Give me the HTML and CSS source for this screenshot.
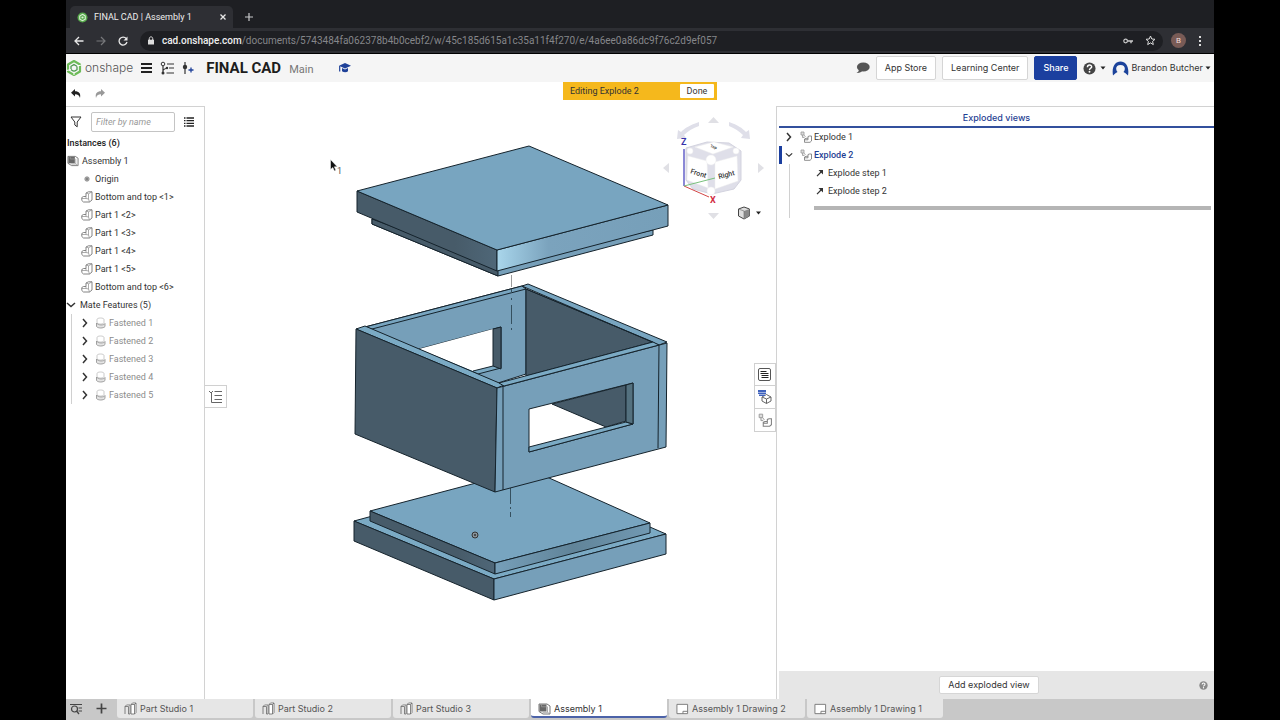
FILE: index.html
```
<!DOCTYPE html>
<html lang="en">
<head>
    <meta charset="UTF-8">
    <meta name="viewport" content="width=device-width, initial-scale=1">
    <title>FINAL CAD | Assembly 1</title>
    <link rel="stylesheet" href="styles.css">
</head>
<body>
<!-- Shared icons -->
<svg class="sprite" aria-hidden="true">
    <symbol id="i-logo" viewBox="0 0 16 16">
        <path d="M8 1 14 4.5v7L8 15 2 11.5v-7z" fill="none" stroke="#6dbb59" stroke-width="2.2" stroke-linejoin="round"/>
        <path d="M8 4.6l3 1.7v3.4l-3 1.7-3-1.7V6.3z" fill="none" stroke="#4f9a52" stroke-width="1.3"/>
        <path d="M.5 10.5 5 9.6M11 6l4.500-1M8 11.500V15" stroke="#fff" stroke-width="1"/>
    </symbol>
    <symbol id="i-part" viewBox="0 0 12 12">
        <path d="M.8 6.500 2.500 5.500H5V2L7.500.8H11V9L8.500 11H2.500L.8 9.500z" fill="#fff" stroke="#777" stroke-width=".9"/>
        <path d="M5 5.500V7.500H.8M5 2l2.500.8V8L5 7.500M7.500 2.800 11 .8M7.500 8l1 3" fill="none" stroke="#8a8a8a" stroke-width=".7"/>
    </symbol>
    <symbol id="i-assembly" viewBox="0 0 13 12">
        <path d="M1 1h8l3 2v8H5L1 8.500z" fill="#fff" stroke="#666" stroke-width=".9"/>
        <path d="M1.500 1.500h7v7h-7z" fill="#686868"/>
        <path d="M3.500 1.500v2.300h5M9.500 3.500v5.800H4.500M9.500 9.300 12 11" fill="none" stroke="#999" stroke-width=".8"/>
    </symbol>
    <symbol id="i-mate" viewBox="0 0 12 12">
        <path d="M2 2.500c0-2 7-2 7 0v3c0 2-7 2-7 0z" fill="none" stroke="#c4c4c4" stroke-width=".9"/>
        <path d="M1.500 6v3.500c1.500 2 7 2 8.500 0V6.500c-1 2-7 2-8.500-.5z" fill="#e4e4e4" stroke="#8d8d8d" stroke-width=".8"/>
    </symbol>
    <symbol id="i-right" viewBox="0 0 8 10">
        <path d="M2 1l3.500 4L2 9" fill="none" stroke="#333" stroke-width="1.500"/>
    </symbol>
    <symbol id="i-down" viewBox="0 0 10 8">
        <path d="M1 2l4 3.500L9 2" fill="none" stroke="#333" stroke-width="1.500"/>
    </symbol>
    <symbol id="i-explode" viewBox="0 0 12 12">
        <path d="M1 1h3v3H1zM4 4l1.500 2M2.500 4v2.500h2" fill="#ddd" stroke="#999" stroke-width=".8"/>
        <path d="M4.500 8 6 7.300h2V5.500L9.500 5h2v5L10 11.300H4.500zM8 7.300v1.500H4.500" fill="#fff" stroke="#808080" stroke-width=".9"/>
    </symbol>
    <symbol id="i-step" viewBox="0 0 8 8">
        <path d="M1 7.200 6 2" stroke="#333" stroke-width="1.200"/>
        <path d="M2.500 1H7v4.500z" fill="#333"/>
    </symbol>
    <symbol id="i-studio" viewBox="0 0 13 13">
        <path d="M1 4.500 2.500 3H6v9H4.500V4.500H1V12M7 2.500 8.500 1H12v9.500L10.500 12H7zM7 2.500h3.500V12M10.500 2.500 12 1" fill="#fff" stroke="#666" stroke-width=".8"/>
    </symbol>
    <symbol id="i-drawing" viewBox="0 0 14 12">
        <path d="M1 1h11.500v10H1z" fill="#fff" stroke="#777"/>
        <path d="M7.500 11V8.500h5" fill="none" stroke="#777"/>
    </symbol>
    <symbol id="i-caret" viewBox="0 0 6 4">
        <path d="M.5.500h5L3 3.500z" fill="#222"/>
    </symbol>
    <symbol id="i-help" viewBox="0 0 14 14">
        <circle cx="7" cy="7" r="6.500" fill="currentColor"/>
        <path d="M4.800 5.600c0-3.200 4.600-2.900 4.500-.3C9.200 6.800 7 6.700 7 8.500" fill="none" stroke="#fff" stroke-width="1.600"/>
        <circle cx="7" cy="10.500" r="1" fill="#fff"/>
    </symbol>
</svg>

<div class="app">
    <!-- Browser chrome -->
    <div class="tabstrip">
        <div class="browser-tab">
            <svg class="favicon" viewBox="0 0 12 12"><circle cx="6" cy="6" r="5.500" fill="#58a94c"/><path d="M6 2.500 9 4.300v3.500L6 9.500 3 7.800V4.300z" fill="none" stroke="#dcf0d8" stroke-width="1.200"/><circle cx="6" cy="6" r="1.200" fill="#dcf0d8"/></svg>
            <span class="browser-tab-title">FINAL CAD | Assembly 1</span>
            <button class="icon-btn" aria-label="Close tab"><svg width="8" height="8" viewBox="0 0 8 8"><path d="M1.500 1.500l5 5M6.500 1.500l-5 5" stroke="#e8e8e8" stroke-width="1.300"/></svg></button>
        </div>
        <button class="icon-btn" aria-label="New tab"><svg width="10" height="10" viewBox="0 0 10 10"><path d="M5 1v8M1 5h8" stroke="#c8c9cb" stroke-width="1.200"/></svg></button>
    </div>
    <div class="urlbar">
        <button class="icon-btn" aria-label="Back"><svg width="10" height="10" viewBox="0 0 10 10"><path d="M9.500 5H1.200M5 1 1 5l4 4" fill="none" stroke="#e8e8e8" stroke-width="1.300"/></svg></button>
        <button class="icon-btn" aria-label="Forward"><svg width="10" height="10" viewBox="0 0 10 10"><path d="M.5 5h8.300M5 1l4 4-4 4" fill="none" stroke="#77787b" stroke-width="1.200"/></svg></button>
        <button class="icon-btn" aria-label="Reload"><svg width="10" height="10" viewBox="0 0 10 10"><path d="M8.300 2.600A4 4 0 1 0 9 6" fill="none" stroke="#e8e8e8" stroke-width="1.300"/><path d="M9.500.500v4h-4z" fill="#e8e8e8"/></svg></button>
        <div class="address">
            <svg width="8" height="9" viewBox="0 0 8 9"><path d="M1 3.700h6v4.800H1z" fill="#ddd"/><path d="M2.300 4V2.500c0-2.200 3.400-2.200 3.400 0V4" fill="none" stroke="#ddd"/></svg>
            <span class="url"><b>cad.onshape.com</b>/documents/5743484fa062378b4b0cebf2/w/45c185d615a1c35a11f4f270/e/4a6ee0a86dc9f76c2d9ef057</span>
            <svg width="10" height="8" viewBox="0 0 10 8"><circle cx="2.600" cy="4" r="1.800" fill="none" stroke="#ccc" stroke-width="1.200"/><path d="M4.400 4H10M8 4v2.300" stroke="#ccc" stroke-width="1.400"/></svg>
            <svg width="11" height="11" viewBox="0 0 11 11"><path d="M5.500 1l1.300 3 3.200.3-2.400 2.100.7 3.200-2.800-1.700-2.800 1.700.7-3.200L1 4.300 4.200 4z" fill="none" stroke="#ddd"/></svg>
        </div>
        <span class="profile">B</span>
        <button class="icon-btn" aria-label="Browser menu"><svg width="4" height="10" viewBox="0 0 4 10"><path d="M1 0h2v2H1zM1 4h2v2H1zM1 8h2v2H1z" fill="#ddd"/></svg></button>
    </div>

    <!-- Document header -->
    <header class="header">
        <svg class="logo" width="16" height="16"><use href="#i-logo"/></svg>
        <span class="brand">onshape</span>
        <div class="header-tools">
            <button class="icon-btn" aria-label="Menu"><svg width="11" height="12" viewBox="0 0 11 12"><path d="M0 2h11M0 6h11M0 10h11" stroke="#222" stroke-width="1.800"/></svg></button>
            <button class="icon-btn" aria-label="Versions"><svg width="14" height="14" viewBox="0 0 14 14"><circle cx="3" cy="3" r="1.800" fill="none" stroke="#333"/><path d="M3 5v6.500M3 10c0-3 3-1 3.500-3.500M7 3h7M9 7h5M6.500 12H14" fill="none" stroke="#333" stroke-width="1.200"/><circle cx="3" cy="12" r="1.500" fill="#333"/><circle cx="7" cy="7" r="1.200" fill="#333"/></svg></button>
            <button class="icon-btn" aria-label="Create version"><svg width="12" height="14" viewBox="0 0 12 14"><path d="M3 1v12" stroke="#333" stroke-width="1.200"/><circle cx="3" cy="6" r="2.200" fill="#333"/><path d="M9 6.500v5M6.500 9h5" stroke="#1f4199" stroke-width="1.300"/></svg></button>
        </div>
        <h1 class="doc-name">FINAL CAD</h1>
        <span class="workspace">Main</span>
        <svg class="cap" width="13" height="11" viewBox="0 0 13 11"><path d="M7 0l6 2.800-6 2.800L1 2.800z" fill="#1f4199"/><path d="M4 5v3.200c2 1.300 4.500 1.300 6 0V5L7 6.500z" fill="#1f4199"/><path d="M1.700 3v5.500" stroke="#1f4199" stroke-width="1.200"/></svg>
        <div class="header-actions">
            <button class="icon-btn" aria-label="Comments"><svg width="14" height="12" viewBox="0 0 14 12"><ellipse cx="7.300" cy="5" rx="6.400" ry="4.600" fill="#555"/><path d="M3 7c0 2-.8 3-2.500 4C3.500 11.300 5.500 10 6.500 8.500z" fill="#555"/></svg></button>
            <button class="btn">App Store</button>
            <button class="btn">Learning Center</button>
            <button class="btn btn-primary">Share</button>
            <button class="icon-btn help-menu" aria-label="Help"><svg width="13" height="13"><use href="#i-help"/></svg><svg width="6" height="4"><use href="#i-caret"/></svg></button>
            <button class="user"><svg width="17" height="15" viewBox="0 0 17 15"><path d="M1 14.500C-.5 6 3 .5 8.500.5S17.500 6 16 14.500l-2.500-2.300-2-1.200c2.500-3 1.500-7-3-7s-5.500 4-3 7l-2 1.200z" fill="#1c439b"/></svg>Brandon Butcher<svg width="6" height="4"><use href="#i-caret"/></svg></button>
        </div>
    </header>

    <div class="toolbar">
        <div class="history">
            <button class="icon-btn" aria-label="Undo"><svg width="10" height="9" viewBox="0 0 10 9"><path d="M0 3.700 4 0v2.300c4 0 6 2.200 5 6.700C8.500 6.500 7 5.200 4 5.200v2.300z" fill="#222"/></svg></button>
            <button class="icon-btn" aria-label="Redo"><svg width="10" height="9" viewBox="0 0 10 9"><path d="M10 3.700 6 0v2.300C2 2.300 0 4.500 1 9c.5-2.500 2-3.800 5-3.800v2.300z" fill="#999"/></svg></button>
        </div>
        <div class="edit-banner">
            <span>Editing Explode 2</span>
            <button class="done">Done</button>
        </div>
    </div>

    <main class="workarea">
        <!-- Instance list -->
        <aside class="sidebar">
            <div class="filter">
                <svg width="12" height="12" viewBox="0 0 12 12"><path d="M1 1h10L7.200 6v4.800L4.800 9V6z" fill="none" stroke="#333"/></svg>
                <input class="filter-input" type="text" placeholder="Filter by name" aria-label="Filter by name">
                <button class="icon-btn" aria-label="List options"><svg width="10" height="10" viewBox="0 0 10 10"><path d="M0 1h1.500M0 3.700h1.500M0 6.300h1.500M0 9h1.500M2.500 1H10M2.500 3.700H10M2.500 6.300H10M2.500 9H10" stroke="#222" stroke-width="1.300"/></svg></button>
            </div>
            <h2 class="list-title">Instances (6)</h2>
            <ul class="tree">
                <li class="tree-root"><svg width="12" height="12"><use href="#i-assembly"/></svg>Assembly 1</li>
                <li class="tree-item"><svg width="12" height="12" viewBox="0 0 12 12"><circle cx="6" cy="6" r="2.200" fill="#aaa" stroke="#888" stroke-width=".8"/><circle cx="6" cy="6" r=".8" fill="#555"/></svg>Origin</li>
                <li class="tree-item"><svg width="12" height="12"><use href="#i-part"/></svg>Bottom and top &lt;1&gt;</li>
                <li class="tree-item"><svg width="12" height="12"><use href="#i-part"/></svg>Part 1 &lt;2&gt;</li>
                <li class="tree-item"><svg width="12" height="12"><use href="#i-part"/></svg>Part 1 &lt;3&gt;</li>
                <li class="tree-item"><svg width="12" height="12"><use href="#i-part"/></svg>Part 1 &lt;4&gt;</li>
                <li class="tree-item"><svg width="12" height="12"><use href="#i-part"/></svg>Part 1 &lt;5&gt;</li>
                <li class="tree-item"><svg width="12" height="12"><use href="#i-part"/></svg>Bottom and top &lt;6&gt;</li>
                <li class="tree-group"><svg width="10" height="8"><use href="#i-down"/></svg>Mate Features (5)</li>
            </ul>
            <ul class="tree mates">
                <li class="mate"><svg width="8" height="10"><use href="#i-right"/></svg><svg width="12" height="12"><use href="#i-mate"/></svg>Fastened 1</li>
                <li class="mate"><svg width="8" height="10"><use href="#i-right"/></svg><svg width="12" height="12"><use href="#i-mate"/></svg>Fastened 2</li>
                <li class="mate"><svg width="8" height="10"><use href="#i-right"/></svg><svg width="12" height="12"><use href="#i-mate"/></svg>Fastened 3</li>
                <li class="mate"><svg width="8" height="10"><use href="#i-right"/></svg><svg width="12" height="12"><use href="#i-mate"/></svg>Fastened 4</li>
                <li class="mate"><svg width="8" height="10"><use href="#i-right"/></svg><svg width="12" height="12"><use href="#i-mate"/></svg>Fastened 5</li>
            </ul>
        </aside>

        <!-- Graphics area -->
        <section class="viewport">
            <svg class="scene" viewBox="205 106 571 593">
                <defs>
                    <linearGradient id="shine"><stop offset="0" stop-color="#aad6eb"/><stop offset=".08" stop-color="#9cc8df"/><stop offset=".3" stop-color="#7ba3bd"/><stop offset="1" stop-color="#769fb9"/></linearGradient>
                    <linearGradient id="side"><stop offset="0" stop-color="#475b69"/><stop offset=".7" stop-color="#475b69"/><stop offset="1" stop-color="#4f6778"/></linearGradient>
                    <linearGradient id="lip"><stop offset="0" stop-color="#769fb9"/><stop offset=".5" stop-color="#618499"/><stop offset="1" stop-color="#7199b2"/></linearGradient>
                </defs>
                <g stroke="#15232c" stroke-width="1" stroke-linejoin="round">
                    <!-- bottom -->
                    <path d="M354 521 528 474 666 534 494 579z" fill="#7baac4"/>
                    <path d="M354 521 494 579V600L354 541z" fill="#475b69"/>
                    <path d="M494 579 666 534V554L494 600z" fill="#769fb9"/>
                    <path d="M370 511 529 469 650 523 495 563z" fill="#78a5c0"/>
                    <path d="M370 511 495 563V574L370 521z" fill="url(#side)"/>
                    <path d="M495 563 650 523V533L495 574z" fill="url(#lip)"/>
                    <path d="M510.500 488V504M510.500 507v2M510.500 512v5" stroke="#35505f"/>
                    <circle cx="475" cy="535" r="3" fill="#88939a" stroke="#333"/><circle cx="475" cy="535" r="1" fill="#333" stroke="none"/>
                    <!-- frame: back wall with its window -->
                    <path d="M365 327 522 286 526 289V374L498 383z" fill="#769fb9"/>
                    <path d="M419 349 501 327V368L478 374z" fill="#7baac4"/>
                    <path d="M419 349 493 329V366L473 371z" fill="#fff" stroke="none"/>
                    <path d="M493 329 501 327V369L493 366z" fill="#475b69"/>
                    <path d="M473 371 493 366" fill="none"/>
                    <path d="M365 327 522 286 526 289 372 329z" fill="#78a5c0"/>
                    <!-- right wall -->
                    <path d="M526 289 653 342 526 376z" fill="#475b69"/>
                    <path d="M528 284 667 342 659 345 522 286z" fill="#78a5c0"/>
                    <path d="M526 289 653 342" fill="none"/>
                    <!-- left wall -->
                    <path d="M356 329 365 326 504 385 497 388z" fill="#7baac4"/>
                    <path d="M356 329 497 388 495 492 355 434z" fill="#475b69"/>
                    <!-- front wall with its window -->
                    <path fill-rule="evenodd" d="M497 388 667 343 666 447 495 492zM529 409 633 383V424L529 452z" fill="#769fb9"/>
                    <path d="M499 383 653 342 659 345 504 386z" fill="#7baac4"/>
                    <path d="M552 404 626 385V421L606 427z" fill="#475b69"/>
                    <path d="M529 447 626 422 633 424 529 452z" fill="#7baac4"/>
                    <path d="M626 385 633 383V424L626 422z" fill="#54717f"/>
                    <path d="M503 386V490M659 345 658 448" fill="none"/>
                    <path d="M511.500 275V287" stroke="#9c9c9c"/>
                    <path d="M511.500 289V293M511.500 298v2M511.500 305v19M511.500 328v2" stroke="#35505f"/>
                    <!-- lid -->
                    <path d="M372 219V224L498 276 653 235V230L498 264z" fill="#769fb9"/>
                    <path d="M372 219V224L498 276V266z" fill="#475b69"/>
                    <path d="M357 191 497 250V271L357 212z" fill="url(#side)"/>
                    <path d="M497 250 668 205V226L497 271z" fill="url(#shine)"/>
                    <path d="M357 191 529 146 668 205 497 250z" fill="#78a5c0"/>
                </g>
                <!-- view cube -->
                <g fill="#dfdfe9">
                    <path d="M708 123l5.500-6 5.500 6zM708 213h11l-5.500 6zM669 163v10l-6-5zM758 163v10l6-5z" fill="#e0e0e5"/>
                    <path d="M699 122c-9 3-14 6-18 10l-3-2-1 9 9-1-2-3c4-4 9-7 15-9zM729 122c9 3 13 6 17 10l3-2 1 9-9-1 2-3c-4-4-9-7-14-9z"/>
                    <path d="M686 148 707 142 729 143 741 151V180L734 189 712 194 693 189 686 180z" stroke="#d3d3df"/>
                </g>
                <g fill="#fff" stroke="#eee" stroke-width=".5">
                    <path d="M695 147 714 142 733 147 713 154z"/>
                    <path d="M688 156 707 161 708 188 687 180z"/>
                    <path d="M715 162 737 156 738 181 715 189z"/>
                    <circle cx="711" cy="160" r="5"/><circle cx="711" cy="191" r="4"/><circle cx="690" cy="151" r="3"/><circle cx="736" cy="151" r="3"/>
                </g>
                <path d="M684 149V186" stroke="#6460c8" stroke-width="1.500"/>
                <path d="M684 186 709 197" stroke="#d34646"/>
                <path d="M684 186 715 178" stroke="#79c17d"/>
                <text class="axis" x="681" y="145" fill="#3733aa">Z</text>
                <text class="axis" x="710" y="203" fill="#d22c42">X</text>
                <text class="face" transform="translate(690 173) rotate(18)">Front</text>
                <text class="face" transform="translate(719 179) rotate(-14)">Right</text>
                <text class="face face-top" transform="translate(710 147) rotate(20)">Top</text>
                <!-- display mode -->
                <path d="M738.500 209 744 207 749.500 209V216L744 219 738.500 216z" fill="#ddd" stroke="#444"/>
                <path d="M744 211 749.500 209V216L744 219z" fill="#888"/><path d="M738.500 209 744 211V219" fill="none" stroke="#777" stroke-width=".7"/>
                <path d="M756 211.500h5l-2.500 3z" fill="#222"/>
                <!-- pointer -->
                <path d="M330.500 159.500v10l2.300-2 1.600 3.500 1.500-.7-1.600-3.500h3z" fill="#111" stroke="#fff" stroke-width=".5"/>
                <text class="pointer-count" x="337" y="174">1</text>
            </svg>
            <button class="flyout flyout-left" aria-label="Feature list"><svg width="14" height="14" viewBox="0 0 14 14"><path d="M0 1l2 2 2-2M2.500 3v9.500H13M5.500 1.500H13M5.500 5.500H13M5.500 9.500H13" fill="none" stroke="#666"/></svg></button>
            <div class="flyout-stack">
                <button class="flyout" aria-label="Properties"><svg width="14" height="14" viewBox="0 0 14 14"><rect x=".5" y=".5" width="12" height="12" rx="1.500" fill="none" stroke="#555"/><path d="M2.500 3.500h6M2.500 5.500h8M3.500 7.500h7M3.500 9.500h7" stroke="#222"/></svg></button>
                <button class="flyout" aria-label="Configurations"><svg width="14" height="14" viewBox="0 0 14 14"><path d="M4 7l4.500-2.500L13 7v4l-4.500 2.500L4 11zM4 7l4.500 2L13 7M8.500 9v4.500" fill="#fff" stroke="#666"/><path d="M0 0h8v2H0zM0 2.500h8v1.500H0zM1 4.500h6v1.500H1z" fill="#3f62bd"/></svg></button>
                <button class="flyout" aria-label="Exploded views"><svg width="14" height="14"><use href="#i-explode"/></svg></button>
            </div>
        </section>

        <!-- Exploded views -->
        <aside class="panel">
            <h2 class="panel-title">Exploded views</h2>
            <ul class="views">
                <li class="view"><svg width="8" height="10"><use href="#i-right"/></svg><svg width="12" height="12"><use href="#i-explode"/></svg>Explode 1</li>
                <li class="view view-active"><svg width="8" height="8"><use href="#i-down"/></svg><svg width="12" height="12"><use href="#i-explode"/></svg>Explode 2</li>
            </ul>
            <ul class="steps">
                <li class="step"><svg width="8" height="8"><use href="#i-step"/></svg>Explode step 1</li>
                <li class="step"><svg width="8" height="8"><use href="#i-step"/></svg>Explode step 2</li>
                <li class="rollback"></li>
            </ul>
            <div class="panel-footer">
                <button class="btn-add">Add exploded view</button>
                <svg class="panel-help" width="9" height="9"><use href="#i-help"/></svg>
            </div>
        </aside>
    </main>

    <!-- Document tabs -->
    <nav class="doc-tabs">
        <div class="doc-tools">
            <button class="icon-btn" aria-label="Tab manager"><svg width="12" height="12" viewBox="0 0 12 12"><path d="M0 1.500h12M8.500 5H12M8.500 8H12" stroke="#444"/><circle cx="4.500" cy="6" r="3" fill="none" stroke="#444" stroke-width="1.200"/><path d="M6.500 8l2.500 3" stroke="#444" stroke-width="1.300"/></svg></button>
            <button class="icon-btn" aria-label="Insert tab"><svg width="11" height="11" viewBox="0 0 11 11"><path d="M5.500.500v10M.5 5.500h10" stroke="#444" stroke-width="1.700"/></svg></button>
        </div>
        <button class="doc-tab"><svg width="13" height="13"><use href="#i-studio"/></svg>Part Studio 1</button>
        <button class="doc-tab"><svg width="13" height="13"><use href="#i-studio"/></svg>Part Studio 2</button>
        <button class="doc-tab"><svg width="13" height="13"><use href="#i-studio"/></svg>Part Studio 3</button>
        <button class="doc-tab doc-tab-active"><svg width="13" height="12"><use href="#i-assembly"/></svg>Assembly 1</button>
        <button class="doc-tab"><svg width="13" height="12"><use href="#i-drawing"/></svg>Assembly 1 Drawing 2</button>
        <button class="doc-tab"><svg width="13" height="12"><use href="#i-drawing"/></svg>Assembly 1 Drawing 1</button>
    </nav>
</div>
</body>
</html>
```
FILE: styles.css
```
* {
    box-sizing: border-box;
}
body {
    margin: 0;
    background: #000;
    color: #333;
    font-family: Roboto, "Liberation Sans", sans-serif;
    font-size: 9px;
    line-height: 18px;
}
button, input {
    font: inherit;
    color: inherit;
}
svg {
    display: block;
    flex: none;
}
ul {
    list-style: none;
    margin: 0;
    padding: 0;
}
.sprite {
    position: absolute;
    width: 0;
    height: 0;
}
.app {
    display: flex;
    flex-direction: column;
    height: 100vh;
    margin: 0 66px;
    background: #fff;
}
.icon-btn {
    display: flex;
    align-items: center;
    padding: 0;
    border: 0;
    background: none;
}

/* Browser chrome */
.tabstrip {
    display: flex;
    align-items: center;
    gap: 11px;
    height: 28px;
    padding: 6px 4px 0;
    background: #1e1f23;
}
.browser-tab {
    display: flex;
    align-items: center;
    width: 163px;
    height: 22px;
    padding: 0 6px 0 7px;
    border-radius: 5px 5px 0 0;
    background: #2e2f34;
    color: #eee;
}
.favicon {
    width: 11px;
    height: 11px;
    margin-right: 6px;
}
.browser-tab-title {
    flex: 1;
}
.urlbar {
    display: flex;
    align-items: center;
    gap: 12px;
    height: 26px;
    padding: 0 12px 0 8px;
    border-bottom: 1px solid #000;
    background: #2e2f34;
}
.address {
    flex: 1;
    display: flex;
    align-items: center;
    gap: 12px;
    height: 20px;
    padding: 0 7px;
    border-radius: 10px;
    background: #1e1f23;
}
.address .url {
    flex: 1;
    margin-left: -5px;
    color: #85868a;
    font-size: 10px;
    white-space: nowrap;
}
.url b {
    color: #eee;
    font-weight: 500;
}
.profile {
    width: 15px;
    margin-left: -4px;
    border-radius: 50%;
    background: #795b56;
    color: #f2dedb;
    font-size: 8px;
    line-height: 15px;
    text-align: center;
}

/* Document header */
.header {
    display: flex;
    align-items: center;
    height: 28px;
    background: #f5f5f5;
    font-family: Inter, sans-serif;
}
.brand {
    margin-left: 3px;
    color: #555;
    font-size: 12px;
    font-weight: 300;
}
.header-tools {
    display: flex;
    gap: 8px;
    margin: 0 12px 0 8px;
}
.doc-name {
    margin: 0;
    color: #1d1d1d;
    font-family: Roboto, sans-serif;
    font-size: 15px;
    font-weight: 700;
}
.workspace {
    margin-left: 8px;
    padding-top: 3px;
    color: #777;
    font-family: Roboto, sans-serif;
    font-size: 11px;
}
.cap {
    margin-left: 25px;
}
.header-actions {
    display: flex;
    align-items: center;
    gap: 6px;
    margin-left: auto;
    padding-right: 3px;
}
.btn {
    height: 24px;
    padding: 0 8px;
    border: 1px solid #d5d5d5;
    border-radius: 2px;
    background: #fff;
}
.btn-primary {
    border-color: #1b3f9f;
    background: #1b3f9f;
    color: #fff;
    font-weight: 500;
}
.help-menu {
    gap: 4px;
    color: #444;
}
.user {
    display: flex;
    align-items: center;
    gap: 2px;
    padding: 0;
    border: 0;
    background: none;
}

/* Undo / redo and the edit banner */
.toolbar {
    display: grid;
    grid-template-columns: 1fr auto 1fr;
    align-items: start;
    height: 24px;
}
.history {
    display: flex;
    gap: 14px;
    padding: 7px 5px;
}
.edit-banner {
    display: flex;
    align-items: center;
    justify-content: space-between;
    width: 154px;
    height: 18px;
    padding: 0 3px 0 7px;
    background: #f5b81c;
}
.done {
    width: 34px;
    height: 14px;
    padding: 0;
    border: 0;
    border-radius: 1px;
    background: #fff;
    line-height: 14px;
}

/* Main area */
.workarea {
    flex: 1;
    display: flex;
    min-height: 0;
}
.sidebar {
    flex: none;
    width: 139px;
    border: solid #d2d2d2;
    border-width: 1px 1px 0 0;
}
.filter {
    display: flex;
    align-items: center;
    justify-content: space-between;
    padding: 5px 10px 2px 4px;
}
.filter-input {
    width: 84px;
    height: 20px;
    padding: 0 4px;
    border: 1px solid #c4c4c4;
    border-radius: 2px;
}
.filter-input::placeholder {
    color: #999;
    font-style: italic;
    opacity: 1;
}
.list-title {
    margin: 0 0 0 1px;
    color: #222;
    font-size: 9px;
    font-weight: 500;
}
.tree-root, .tree-item, .tree-group, .mate {
    display: flex;
    align-items: center;
    height: 18px;
    white-space: nowrap;
}
.tree-root {
    gap: 3px;
    padding-left: 1px;
}
.tree-item {
    gap: 2px;
    padding-left: 15px;
}
.tree-group {
    gap: 4px;
}
.mates {
    margin-left: 5px;
    border-left: 1px solid #d0d0d0;
}
.mate {
    gap: 6px;
    padding-left: 9px;
    color: #8c8c8c;
}
.mate svg + svg {
    margin-right: -4px;
}
.viewport {
    flex: 1;
    position: relative;
    min-width: 0;
}
.scene {
    width: 100%;
    height: 100%;
}
.axis {
    font-size: 9px;
    font-weight: 700;
}
.face {
    fill: #333;
    font-size: 7px;
    font-weight: 500;
}
.face-top {
    font-size: 4px;
}
.pointer-count {
    fill: #555;
    font-size: 9px;
}
.flyout {
    display: flex;
    align-items: center;
    justify-content: center;
    width: 22px;
    height: 23px;
    padding: 0;
    border: 1px solid #d0d0d0;
    background: #fff;
}
.flyout-left {
    position: absolute;
    top: 279px;
    left: 0;
    border-left: 0;
}
.flyout-stack {
    position: absolute;
    top: 257px;
    right: 0;
}
.flyout + .flyout {
    border-top: 0;
}

/* Exploded views panel */
.panel {
    flex: none;
    display: flex;
    flex-direction: column;
    width: 438px;
    padding-left: 2px;
    border: solid #d2d2d2;
    border-width: 1px 0 0 1px;
}
.panel-title {
    margin: 0;
    padding-top: 3px;
    border-bottom: 2px solid #33509d;
    color: #1f3f94;
    font-family: Inter, sans-serif;
    font-size: 9px;
    font-weight: 500;
    line-height: 16px;
    text-align: center;
}
.view {
    display: flex;
    align-items: center;
    gap: 7px;
    height: 18px;
    padding-left: 6px;
}
.view svg + svg {
    margin-right: -5px;
}
.view-active {
    padding-left: 3px;
    border-left: 3px solid #1b3f9f;
    color: #1f3f94;
    font-weight: 500;
}
.steps {
    margin-left: 10px;
    border-left: 1px solid #d0d0d0;
}
.step {
    display: flex;
    align-items: center;
    gap: 4px;
    height: 18px;
    padding-left: 26px;
}
.rollback {
    height: 4px;
    margin: 6px 3px 8px 24px;
    background: #b5b5b5;
}
.panel-footer {
    display: flex;
    align-items: center;
    justify-content: center;
    height: 28px;
    margin-top: auto;
    padding-right: 6px;
    background: #e6e6e6;
}
.btn-add {
    height: 18px;
    margin: 0 auto;
    padding: 0 8px;
    border: 1px solid #d6d6d6;
    border-radius: 2px;
    background: #fff;
    font-family: Inter, sans-serif;
    line-height: 16px;
}
.panel-help {
    color: #8a8a8a;
}

/* Document tabs */
.doc-tabs {
    display: flex;
    gap: 2px;
    height: 21px;
    padding-bottom: 2px;
    background: #c8c8c8;
    font-family: Inter, sans-serif;
}
.doc-tools {
    display: flex;
    align-items: center;
    gap: 14px;
    width: 49px;
    padding-left: 4px;
}
.doc-tab {
    display: flex;
    align-items: center;
    gap: 3px;
    width: 136px;
    padding: 0 7px;
    border: 0;
    border-radius: 0 0 3px 3px;
    background: #e6e6e6;
    color: #555;
    white-space: nowrap;
}
.doc-tab-active {
    padding-top: 2px;
    border-bottom: 2px solid #4b62a8;
    background: #fff;
    color: #333;
}
```
